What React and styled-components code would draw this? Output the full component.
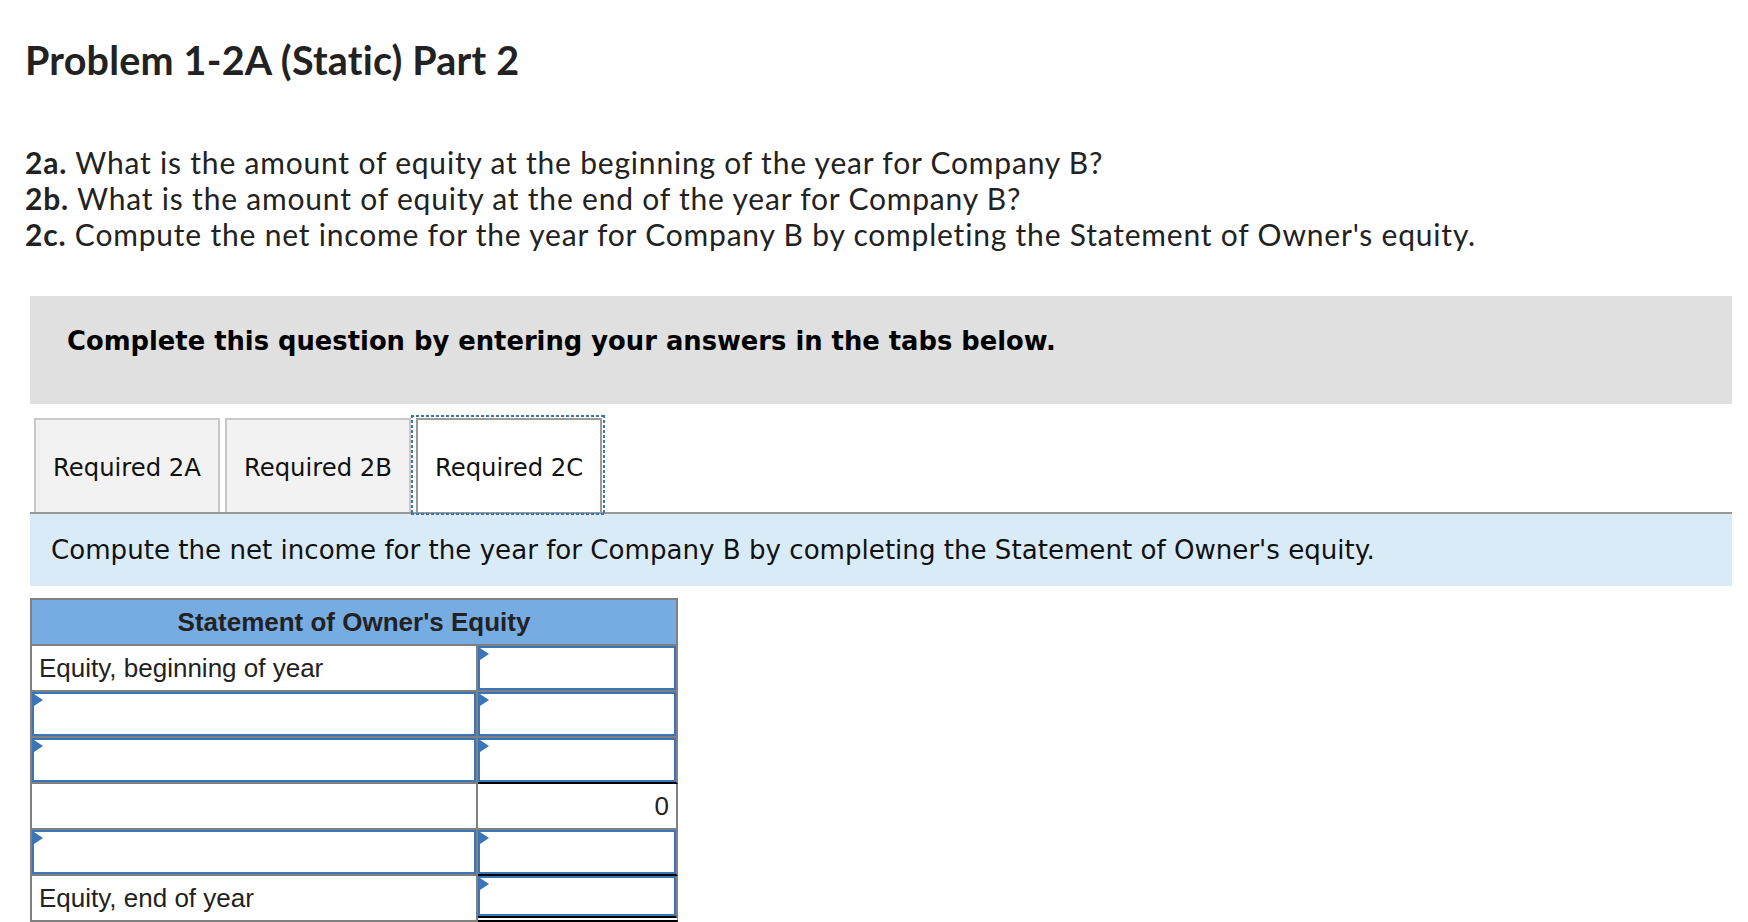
import React from "react";
import styled, { createGlobalStyle, css } from "styled-components";

const Global = createGlobalStyle`
  html, body { margin: 0; padding: 0; background: #fff; }
`;

const Page = styled.div`
  padding: 37px 16px 0 25px;
`;

const Title = styled.h1`
  margin: 0;
  font-family: Lato, "Open Sans", sans-serif;
  font-weight: 700;
  font-size: 39.5px;
  line-height: 46px;
  letter-spacing: 0.2px;
  color: #222;
`;

const Questions = styled.div`
  margin-top: 61px;
  font-family: Lato, "Open Sans", sans-serif;
  font-size: 30px;
  line-height: 36px;
  letter-spacing: 0.8px;
  color: #222;
`;

const QLine = styled.p`
  margin: 0;
`;

const QLabel = styled.b`
  font-weight: 700;
`;

const Section = styled.div`
  margin: 44px 0 0 5px;
`;

const Banner = styled.div`
  height: 108px;
  box-sizing: border-box;
  padding: 30px 37px 0;
  background: #e0e0e0;
  font-family: "DejaVu Sans", Verdana, sans-serif;
  font-weight: 700;
  font-size: 25.8px;
  line-height: 30px;
  color: #000;
`;

const TabList = styled.div`
  margin-top: 14px;
  display: flex;
  gap: 5px;
  padding-left: 4px;
  border-bottom: 2px solid #999;
`;

const dots = (dir) =>
  `repeating-linear-gradient(${dir}, #3a74b9 0 3px, transparent 3px 5px)`;

const Tab = styled.div`
  position: relative;
  height: 94px;
  box-sizing: border-box;
  display: flex;
  align-items: center;
  padding: 2px 17px 0;
  border: 2px solid #c8c8c8;
  border-bottom: none;
  background: #f2f2f2;
  font-family: "DejaVu Sans", Verdana, sans-serif;
  font-size: 24.3px;
  color: #111;
  ${(p) =>
    p.$active &&
    css`
      background: #fff;
      border-color: #999;
      &::after {
        content: "";
        position: absolute;
        top: -5px;
        left: -7px;
        right: -5px;
        bottom: -3px;
        pointer-events: none;
        background: ${dots("90deg")} top / 100% 2px no-repeat,
          ${dots("90deg")} bottom / 100% 2px no-repeat,
          ${dots("180deg")} left / 2px 100% no-repeat,
          ${dots("180deg")} right / 2px 100% no-repeat;
      }
    `}
`;

const Instruction = styled.div`
  height: 72px;
  box-sizing: border-box;
  display: flex;
  align-items: center;
  padding-left: 21px;
  background: #d9ebf7;
  font-family: "DejaVu Sans", Verdana, sans-serif;
  font-size: 26.1px;
  color: #111;
`;

const Sheet = styled.table`
  margin-top: 12px;
  border-collapse: separate;
  border-spacing: 0;
  border-top: 2px solid #808080;
  border-left: 2px solid #808080;
  font-family: "Liberation Sans", Arial, sans-serif;
  font-size: 26px;
  color: #222;
`;

const HeadCell = styled.th`
  padding: 0;
  height: 44px;
  background: #77ace2;
  border-right: 2px solid #808080;
  border-bottom: 2px solid #808080;
  font-weight: 700;
  text-align: center;
  line-height: 44px;
`;

const Cell = styled.td`
  padding: 0;
  width: ${(p) => p.$w}px;
  border-right: 2px solid #808080;
  border-bottom: ${(p) =>
    p.$rule === "double"
      ? "6px double #000"
      : p.$rule === "single"
      ? "2px solid #000"
      : "2px solid #808080"};
  vertical-align: top;
`;

const Label = styled.div`
  height: 44px;
  line-height: 44px;
  padding: 0 7px;
  white-space: nowrap;
`;

const Amount = styled.div`
  height: 44px;
  line-height: 44px;
  padding: 0 7px;
  text-align: right;
`;

const InputBox = styled.div`
  position: relative;
  height: ${(p) => p.$h || 44}px;
  box-sizing: border-box;
  border: 2px solid #3a74b9;
  background: #fff;
  &::before {
    content: "";
    position: absolute;
    top: 0;
    left: 0;
    border-top: 6.5px solid transparent;
    border-bottom: 6.5px solid transparent;
    border-left: 9px solid #3a74b9;
  }
`;

const rows = [
  { left: { text: "Equity, beginning of year" }, right: { input: true } },
  { left: { input: true }, right: { input: true } },
  { left: { input: true }, right: { input: true }, rule: "single" },
  { left: { text: "" }, right: { amount: "0" } },
  { left: { input: true }, right: { input: true }, rule: "single" },
  { left: { text: "Equity, end of year" }, right: { input: true, h: 40 }, rule: "double" },
];

function Content({ c }) {
  if (c.input) return <InputBox $h={c.h} />;
  if (c.amount !== undefined) return <Amount>{c.amount}</Amount>;
  return <Label>{c.text}</Label>;
}

export default function App() {
  return (
    <>
      <Global />
      <Page>
        <Title>Problem 1-2A (Static) Part 2</Title>
        <Questions>
          <QLine>
            <QLabel>2a.</QLabel> What is the amount of equity at the beginning of the year for Company B?
          </QLine>
          <QLine>
            <QLabel>2b.</QLabel> What is the amount of equity at the end of the year for Company B?
          </QLine>
          <QLine>
            <QLabel>2c.</QLabel> Compute the net income for the year for Company B by completing the Statement of Owner's equity.
          </QLine>
        </Questions>
        <Section>
          <Banner>Complete this question by entering your answers in the tabs below.</Banner>
          <TabList>
            <Tab>Required 2A</Tab>
            <Tab>Required 2B</Tab>
            <Tab $active>Required 2C</Tab>
          </TabList>
          <Instruction>
            Compute the net income for the year for Company B by completing the Statement of Owner's equity.
          </Instruction>
          <Sheet>
            <thead>
              <tr>
                <HeadCell colSpan={2}>Statement of Owner's Equity</HeadCell>
              </tr>
            </thead>
            <tbody>
              {rows.map((r, i) => (
                <tr key={i}>
                  <Cell $w={444}>
                    <Content c={r.left} />
                  </Cell>
                  <Cell $w={198} $rule={r.rule}>
                    <Content c={r.right} />
                  </Cell>
                </tr>
              ))}
            </tbody>
          </Sheet>
        </Section>
      </Page>
    </>
  );
}
